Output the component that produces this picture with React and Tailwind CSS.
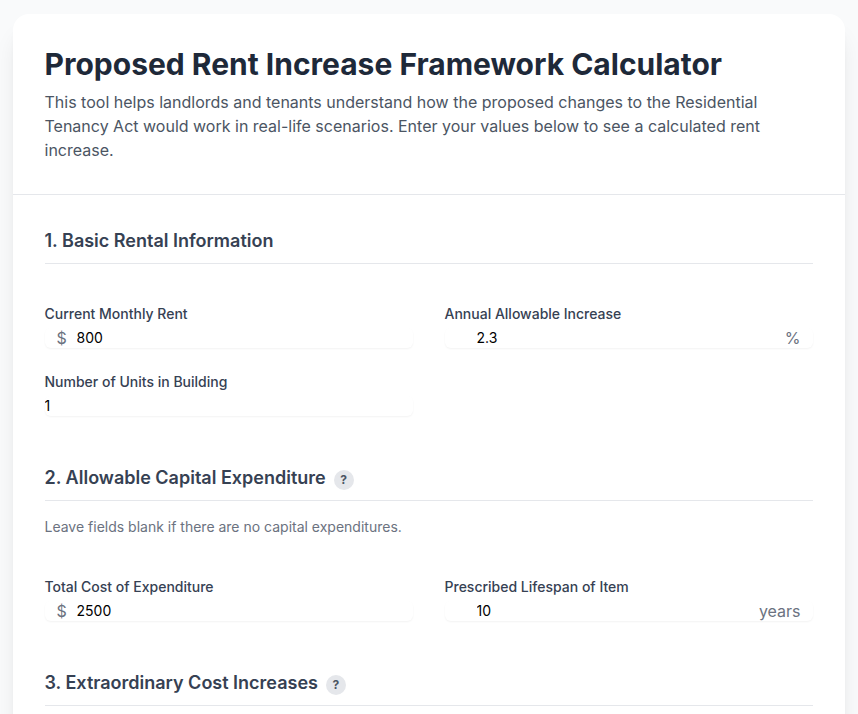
/**
 * Proposed Rent Increase Framework Calculator
 */

import { useState } from 'react';

const INITIAL_VALUES = {
  rent: '800',
  allowable: '2.3',
  units: '1',
  cost: '2500',
  lifespan: '10',
};

export default function App() {
  const [values, setValues] = useState(INITIAL_VALUES);

  const bind = (name) => ({
    id: name,
    value: values[name],
    onChange: (e) => setValues({ ...values, [name]: e.target.value }),
  });

  return (
    <div className="h-screen overflow-hidden bg-gray-50 pl-[12.5px] pt-3.5 font-['Inter',sans-serif] text-gray-800">
      <div className="min-h-[900px] w-[832px] rounded-2xl bg-white shadow-xl">
        {/* Page header */}
        <header className="border-b border-gray-200 p-8">
          <h1 className="text-3xl font-bold text-gray-800">
            Proposed Rent Increase Framework Calculator
          </h1>
          <p className="mt-2 text-[#4b5563]">
            This tool helps landlords and tenants understand how the proposed changes to the
            Residential Tenancy Act would work in real-life scenarios. Enter your values below to
            see a calculated rent increase.
          </p>
        </header>

        <main className="space-y-12 p-8">
          <Section title="1. Basic Rental Information">
            <Field label="Current Monthly Rent" prefix="$" {...bind('rent')} />
            <Field label="Annual Allowable Increase" suffix="%" {...bind('allowable')} />
            <Field label="Number of Units in Building" {...bind('units')} />
          </Section>

          <Section
            title="2. Allowable Capital Expenditure"
            help
            note="Leave fields blank if there are no capital expenditures."
          >
            <Field label="Total Cost of Expenditure" prefix="$" {...bind('cost')} />
            <Field label="Prescribed Lifespan of Item" suffix="years" {...bind('lifespan')} />
          </Section>

          <Section title="3. Extraordinary Cost Increases" help />
        </main>
      </div>
    </div>
  );
}

// ─────────────────────────────────────────────────────────────────────────────
// Section - titled group of fields
// ─────────────────────────────────────────────────────────────────────────────

function Section({ title, help, note, children }) {
  return (
    <section>
      <div className="flex items-center border-b border-gray-200 pb-2">
        <h2 className="text-lg font-semibold text-gray-700">{title}</h2>
        {help && (
          <button
            type="button"
            className="mt-0.5 -mb-0.5 ml-2 flex size-5 items-center justify-center rounded-full bg-gray-200 text-xs font-bold text-[#4b5563]"
          >
            ?
          </button>
        )}
      </div>
      {note && <p className="mt-4 text-sm text-[#6b7280]">{note}</p>}
      <div className="mt-10 grid grid-cols-2 gap-x-8 gap-y-6">{children}</div>
    </section>
  );
}

// ─────────────────────────────────────────────────────────────────────────────
// Field - labelled input with an optional unit on either side
// ─────────────────────────────────────────────────────────────────────────────

function Field({ label, prefix, suffix, id, ...inputProps }) {
  const padding = prefix || suffix ? 'pl-8' : 'pl-0';

  return (
    <div>
      <label htmlFor={id} className="block text-sm font-medium text-gray-700">
        {label}
      </label>
      <div className="relative mt-1 rounded-md shadow-xs">
        {prefix && (
          <span className="pointer-events-none absolute inset-y-0 left-0 flex items-center pl-3 text-[#6b7280]">
            {prefix}
          </span>
        )}
        <input
          id={id}
          type="text"
          className={`block w-full text-sm text-black outline-none ${padding}`}
          {...inputProps}
        />
        {suffix && (
          <span className="pointer-events-none absolute inset-y-0 right-0 flex items-center pr-3 text-[#6b7280]">
            {suffix}
          </span>
        )}
      </div>
    </div>
  );
}
